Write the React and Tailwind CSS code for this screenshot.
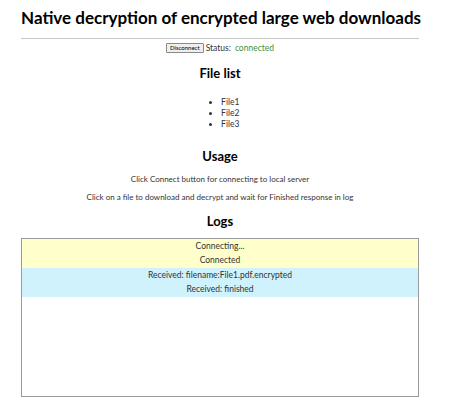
export default function App() {
  const logs = [
    { text: "Connecting...", cls: "bg-[#ffffcc]" },
    { text: "Connected", cls: "bg-[#ffffcc]" },
    { text: "Received: filename:File1.pdf.encrypted", cls: "bg-[#cff2fc]" },
    { text: "Received: finished", cls: "bg-[#cff2fc]" },
  ];

  return (
    <div
      className="min-h-screen bg-white text-[#333]"
      style={{ fontFamily: 'Lato, "Open Sans", sans-serif' }}
    >
      <div className="ml-[21px] w-[398px] flex flex-col">
        <h1 className="pt-[6px] text-[17px] leading-[24px] font-bold text-black whitespace-nowrap">
          Native decryption of encrypted large web downloads
        </h1>
        <hr className="mt-[8px] border-t border-[#c8c8c8]" />

        <div className="mt-[3px] h-[12px] flex items-center justify-center gap-[2px] text-[8.5px] leading-[12px]">
          <button className="h-[10px] px-[3px] border border-[#8a8a8a] bg-[#efefef] rounded-[1px] text-[6px] leading-[8px] text-black">
            Disconnect
          </button>
          <span>Status:</span>
          <span className="ml-[2px] text-[#3f8f3f]">connected</span>
        </div>

        <h2 className="mt-[11px] text-center text-[13px] leading-[16px] font-bold text-black">
          File list
        </h2>
        <ul className="mt-[16px] pl-[8px] list-disc list-inside text-center text-[8.5px] leading-[11px]">
          <li>File1</li>
          <li>File2</li>
          <li>File3</li>
        </ul>

        <h2 className="mt-[18px] text-center text-[13px] leading-[16px] font-bold text-black">
          Usage
        </h2>
        <p className="mt-[9px] text-center text-[8px] leading-[12px]">
          Click Connect button for connecting to local server
        </p>
        <p className="mt-[6px] text-center text-[8px] leading-[12px]">
          Click on a file to download and decrypt and wait for Finished response in log
        </p>

        <h2 className="mt-[10px] text-center text-[13px] leading-[16px] font-bold text-black">
          Logs
        </h2>
        <div className="mt-[9px] h-[159px] border border-[#9a9a9a] flex flex-col">
          {logs.map((l, i) => (
            <div
              key={i}
              className={`${l.cls} h-[14.5px] flex items-center justify-center text-[8.5px]`}
            >
              {l.text}
            </div>
          ))}
        </div>
      </div>
    </div>
  );
}
